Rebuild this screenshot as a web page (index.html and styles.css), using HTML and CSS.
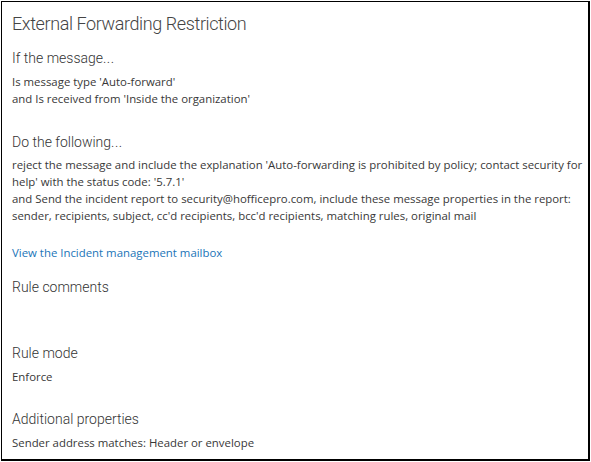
FILE: index.html
```html
<!DOCTYPE html>
<html>
<head>
<meta charset="utf-8">
<link rel="stylesheet" href="styles.css">
</head>
<body>
<div class="frame">
  <h1 class="title">External Forwarding Restriction</h1>
  <section class="sec sec-if">
    <h2 class="head">If the message<span class="dots">...</span></h2>
    <p class="body">Is message type 'Auto-forward'<br>and Is received from 'Inside the organization'</p>
  </section>
  <section class="sec sec-do">
    <h2 class="head">Do the following<span class="dots">...</span></h2>
    <p class="body">reject the message and include the explanation 'Auto-forwarding is prohibited by policy; contact security for help' with the status code: '5.7.1'<br>and Send the incident report to security@hofficepro.com, include these message properties in the report: sender, recipients, subject, cc'd recipients, bcc'd recipients, matching rules, original mail</p>
  </section>
  <a class="link" href="#">View the Incident management mailbox</a>
  <section class="sec sec-comments">
    <h2 class="head">Rule comments</h2>
  </section>
  <section class="sec sec-mode">
    <h2 class="head">Rule mode</h2>
    <p class="body">Enforce</p>
  </section>
  <section class="sec sec-add">
    <h2 class="head">Additional properties</h2>
    <p class="body">Sender address matches: Header or envelope</p>
  </section>
</div>
</body>
</html>
```
FILE: styles.css
```css
html, body {
  margin: 0;
  padding: 0;
  background: #fff;
}
body {
  font-family: "Open Sans", "Noto Sans", sans-serif;
  color: #333;
}
.frame {
  box-sizing: border-box;
  width: 589px;
  height: 460px;
  margin: 1px 0 0 1px;
  border-left: 1px solid #000;
  border-top: 1px solid #000;
  border-right: 2px solid #000;
  border-bottom: 2px solid #000;
  padding: 10px 1px 0 10px;
  display: flex;
  flex-direction: column;
  overflow: hidden;
}
.title {
  margin: 0;
  font-family: Roboto, "Open Sans", sans-serif;
  font-size: 18px;
  font-weight: 300;
  letter-spacing: -0.4px;
  color: #444;
  line-height: 24px;
}
.sec { margin: 0; }
.head {
  margin: 0;
  font-family: Roboto, "Open Sans", sans-serif;
  font-size: 14px;
  font-weight: 300;
  color: #333;
  line-height: 20px;
}
.dots { letter-spacing: 0.5px; }
.body {
  margin: 0;
  font-size: 11.4px;
  line-height: 16.7px;
  color: #383838;
}
.sec-if { margin-top: 12px; }
.sec-if .head { margin-bottom: 6px; }
.sec-do { margin-top: 25px; }
.sec-do .head { margin-bottom: 5px; }
.link {
  margin-top: 20px;
  font-size: 11.4px;
  line-height: 17px;
  color: #1a74b8;
  text-decoration: none;
  align-self: flex-start;
}
.sec-comments { margin-top: 16px; }
.sec-mode { margin-top: 46px; }
.sec-mode .head { margin-bottom: 6px; }
.sec-add { margin-top: 23px; }
.sec-add .head { margin-bottom: 6px; }
```
